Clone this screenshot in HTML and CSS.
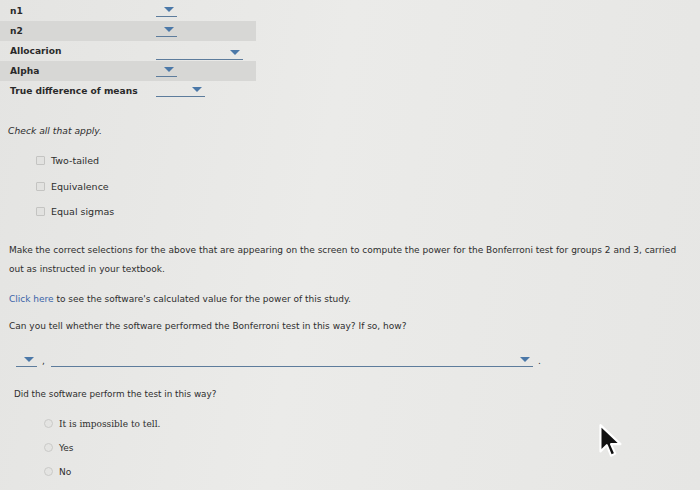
FILE: index.html
```html
<!DOCTYPE html>
<html>
<head>
    <link rel="stylesheet" href="styles.css">
</head>
<body>
    <div class="settings">
        <div class="row">
            <span class="label">n1</span>
            <span class="drop small"><i class="arrow"></i></span>
        </div>
        <div class="row shaded">
            <span class="label">n2</span>
            <span class="drop small"><i class="arrow"></i></span>
        </div>
        <div class="row">
            <span class="label">Allocarion</span>
            <span class="drop wide low"><i class="arrow"></i></span>
        </div>
        <div class="row shaded">
            <span class="label">Alpha</span>
            <span class="drop small"><i class="arrow"></i></span>
        </div>
        <div class="row">
            <span class="label">True difference of means</span>
            <span class="drop mid"><i class="arrow"></i></span>
        </div>
    </div>

    <p class="hint">Check all that apply.</p>

    <div class="checks">
        <label class="check"><span class="box"></span>Two-tailed</label>
        <label class="check"><span class="box"></span>Equivalence</label>
        <label class="check"><span class="box"></span>Equal sigmas</label>
    </div>

    <p class="text para">Make the correct selections for the above that are appearing on the screen to compute the power for the Bonferroni test for groups 2 and 3, carried out as instructed in your textbook.</p>

    <p class="text click"><a href="#">Click here</a> to see the software's calculated value for the power of this study.</p>

    <p class="text ask">Can you tell whether the software performed the Bonferroni test in this way? If so, how?</p>

    <div class="answer">
        <span class="drop small"><i class="arrow"></i></span>
        <span class="punct">,</span>
        <span class="drop long"><i class="arrow"></i></span>
        <span class="punct">.</span>
    </div>

    <p class="text did">Did the software perform the test in this way?</p>

    <div class="radios">
        <label class="radio"><span class="dot"></span><span class="serif">It is impossible to tell.</span></label>
        <label class="radio"><span class="dot"></span>Yes</label>
        <label class="radio"><span class="dot"></span>No</label>
    </div>

    <svg class="cursor" width="28" height="38" viewBox="0 0 26 36">
        <path d="M3 2 L3 27 L9 21 L13 31 L17 29 L13 20 L22 20 Z" fill="#111" stroke="#fff" stroke-width="2" stroke-linejoin="round"/>
    </svg>
</body>
</html>
```

FILE: styles.css
```css
* {
    box-sizing: border-box;
}

body {
    margin: 0;
    font-family: "DejaVu Sans", Verdana, sans-serif;
    font-size: 9px;
    color: #2e2e2e;
    background: linear-gradient(100deg, #e4e4e2 0%, #ebebe9 45%, #e6e6e4 100%);
    width: 700px;
    height: 490px;
    overflow: hidden;
    position: relative;
}

.settings {
    width: 256px;
    padding-top: 1px;
}

.row {
    display: flex;
    align-items: center;
    height: 20px;
    padding-left: 10px;
}

.row.shaded {
    background-color: #d7d7d5;
}

.label {
    width: 146px;
    font-weight: bold;
    font-size: 9.1px;
    color: #2a2a2a;
}

.drop {
    display: inline-block;
    position: relative;
    height: 12px;
    border-bottom: 1px solid #5d7c9c;
}

.drop .arrow {
    position: absolute;
    right: 3px;
    top: 2px;
    width: 0;
    height: 0;
    border-left: 5px solid transparent;
    border-right: 5px solid transparent;
    border-top: 5px solid #4b78a8;
}

.drop.small {
    width: 21px;
}

.drop.wide {
    width: 87px;
}

.drop.low {
    margin-top: 6px;
}

.drop.mid {
    width: 49px;
}

.drop.long {
    width: 482px;
}

.hint {
    margin: 24px 0 0 8px;
    font-style: italic;
    font-size: 9.2px;
}

.checks {
    margin: 18px 0 0 36px;
    display: flex;
    flex-direction: column;
    gap: 12.5px;
    font-size: 9.5px;
}

.check {
    display: flex;
    align-items: center;
    height: 13px;
}

.box {
    width: 9px;
    height: 9px;
    border: 1px solid #c4c4c2;
    background: #e2e2e0;
    border-radius: 1px;
    margin-right: 6px;
}

.text {
    margin: 0 0 0 9px;
    line-height: 19px;
}

.para {
    margin-top: 23px;
    width: 680px;
}

.click {
    margin-top: 11px;
}

.click a {
    color: #3a64a8;
    text-decoration: none;
}

.ask {
    margin-top: 8px;
}

.answer {
    display: flex;
    align-items: flex-end;
    margin: 17px 0 0 16px;
    height: 14px;
}

.punct {
    margin: 0 6px 0 5px;
    line-height: 12px;
}

.did {
    margin: 18px 0 0 14px;
    font-size: 8.8px;
}

.radios {
    margin: 13px 0 0 44px;
    display: flex;
    flex-direction: column;
    gap: 11px;
}

.radio {
    display: flex;
    align-items: center;
    height: 13px;
}

.dot {
    width: 9px;
    height: 9px;
    border-radius: 50%;
    border: 1px solid #cacac8;
    background: #e4e4e2;
    margin-right: 6px;
}

.serif {
    font-family: "DejaVu Serif", serif;
    font-size: 9px;
}

.cursor {
    position: absolute;
    left: 597px;
    top: 423px;
}
```
